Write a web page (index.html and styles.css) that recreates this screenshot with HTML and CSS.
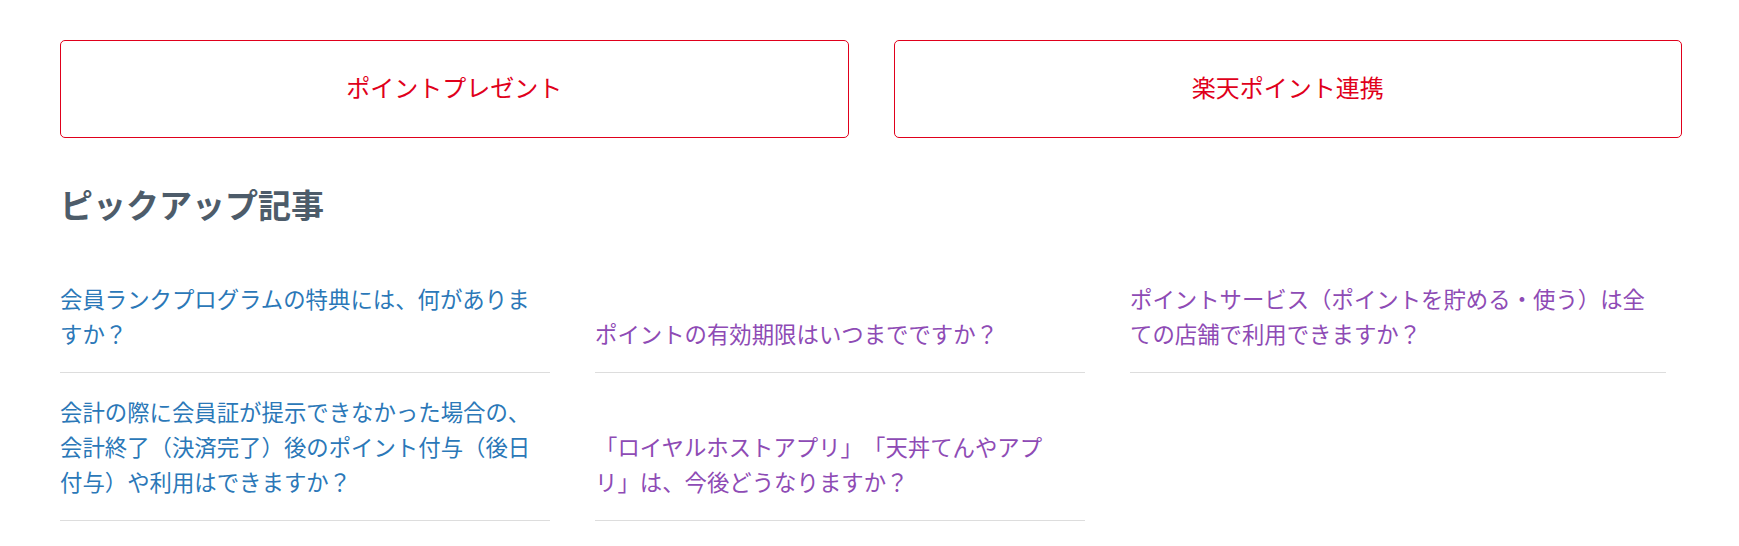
FILE: index.html
```html
<!DOCTYPE html>
<html lang="ja">
<head>
  <meta charset="UTF-8">
  <meta name="viewport" content="width=device-width, initial-scale=1.0">
  <title>ピックアップ記事</title>
  <link rel="stylesheet" href="styles.css">
</head>
<body>
  <div class="page">
    <div class="point-links">
      <a class="point-button" href="#">ポイントプレゼント</a>
      <a class="point-button" href="#">楽天ポイント連携</a>
    </div>

    <h2 class="pickup-title">ピックアップ記事</h2>

    <ul class="pickup-list">
      <li class="pickup-item"><a href="#">会員ランクプログラムの特典には、何がありますか？</a></li>
      <li class="pickup-item"><a class="visited" href="#">ポイントの有効期限はいつまでですか？</a></li>
      <li class="pickup-item"><a class="visited" href="#">ポイントサービス（ポイントを貯める・使う）は全ての店舗で利用できますか？</a></li>
      <li class="pickup-item"><a href="#">会計の際に会員証が提示できなかった場合の、会計終了（決済完了）後のポイント付与（後日付与）や利用はできますか？</a></li>
      <li class="pickup-item"><a class="visited" href="#">「ロイヤルホストアプリ」「天丼てんやアプリ」は、今後どうなりますか？</a></li>
    </ul>
  </div>
</body>
</html>
```

FILE: styles.css
```css
body {
  margin: 0;
  background-color: #fff;
  font-family: "Noto Sans CJK JP", "Noto Sans", sans-serif;
  color: #333;
  text-spacing-trim: space-all;
}

.page {
  width: 1622px;
  padding: 40px 0 0 60px;
}

.point-links {
  display: grid;
  grid-template-columns: 1fr 1fr;
  gap: 45px;
}

.point-button {
  box-sizing: border-box;
  display: flex;
  align-items: center;
  justify-content: center;
  height: 98px;
  padding-bottom: 6px;
  border: 1px solid #e0001b;
  border-radius: 5px;
  color: #e0001b;
  font-size: 24px;
  text-decoration: none;
}

.pickup-title {
  margin: 44px 0 33px;
  font-size: 33px;
  line-height: 44.8px;
  font-weight: bold;
  color: #4d5c6a;
}

.pickup-list {
  display: grid;
  grid-template-columns: 490px 490px 536px;
  column-gap: 45px;
  margin: 0;
  padding: 0;
  list-style: none;
}

.pickup-item {
  display: flex;
  align-items: flex-end;
  padding: 21px 0 22px;
  border-bottom: 1px solid #dddddd;
  font-size: 22.4px;
  line-height: 1.55;
}

.pickup-item a {
  color: #2b78b8;
  text-decoration: none;
}

.pickup-item a.visited {
  color: #8e4bb5;
}
```
